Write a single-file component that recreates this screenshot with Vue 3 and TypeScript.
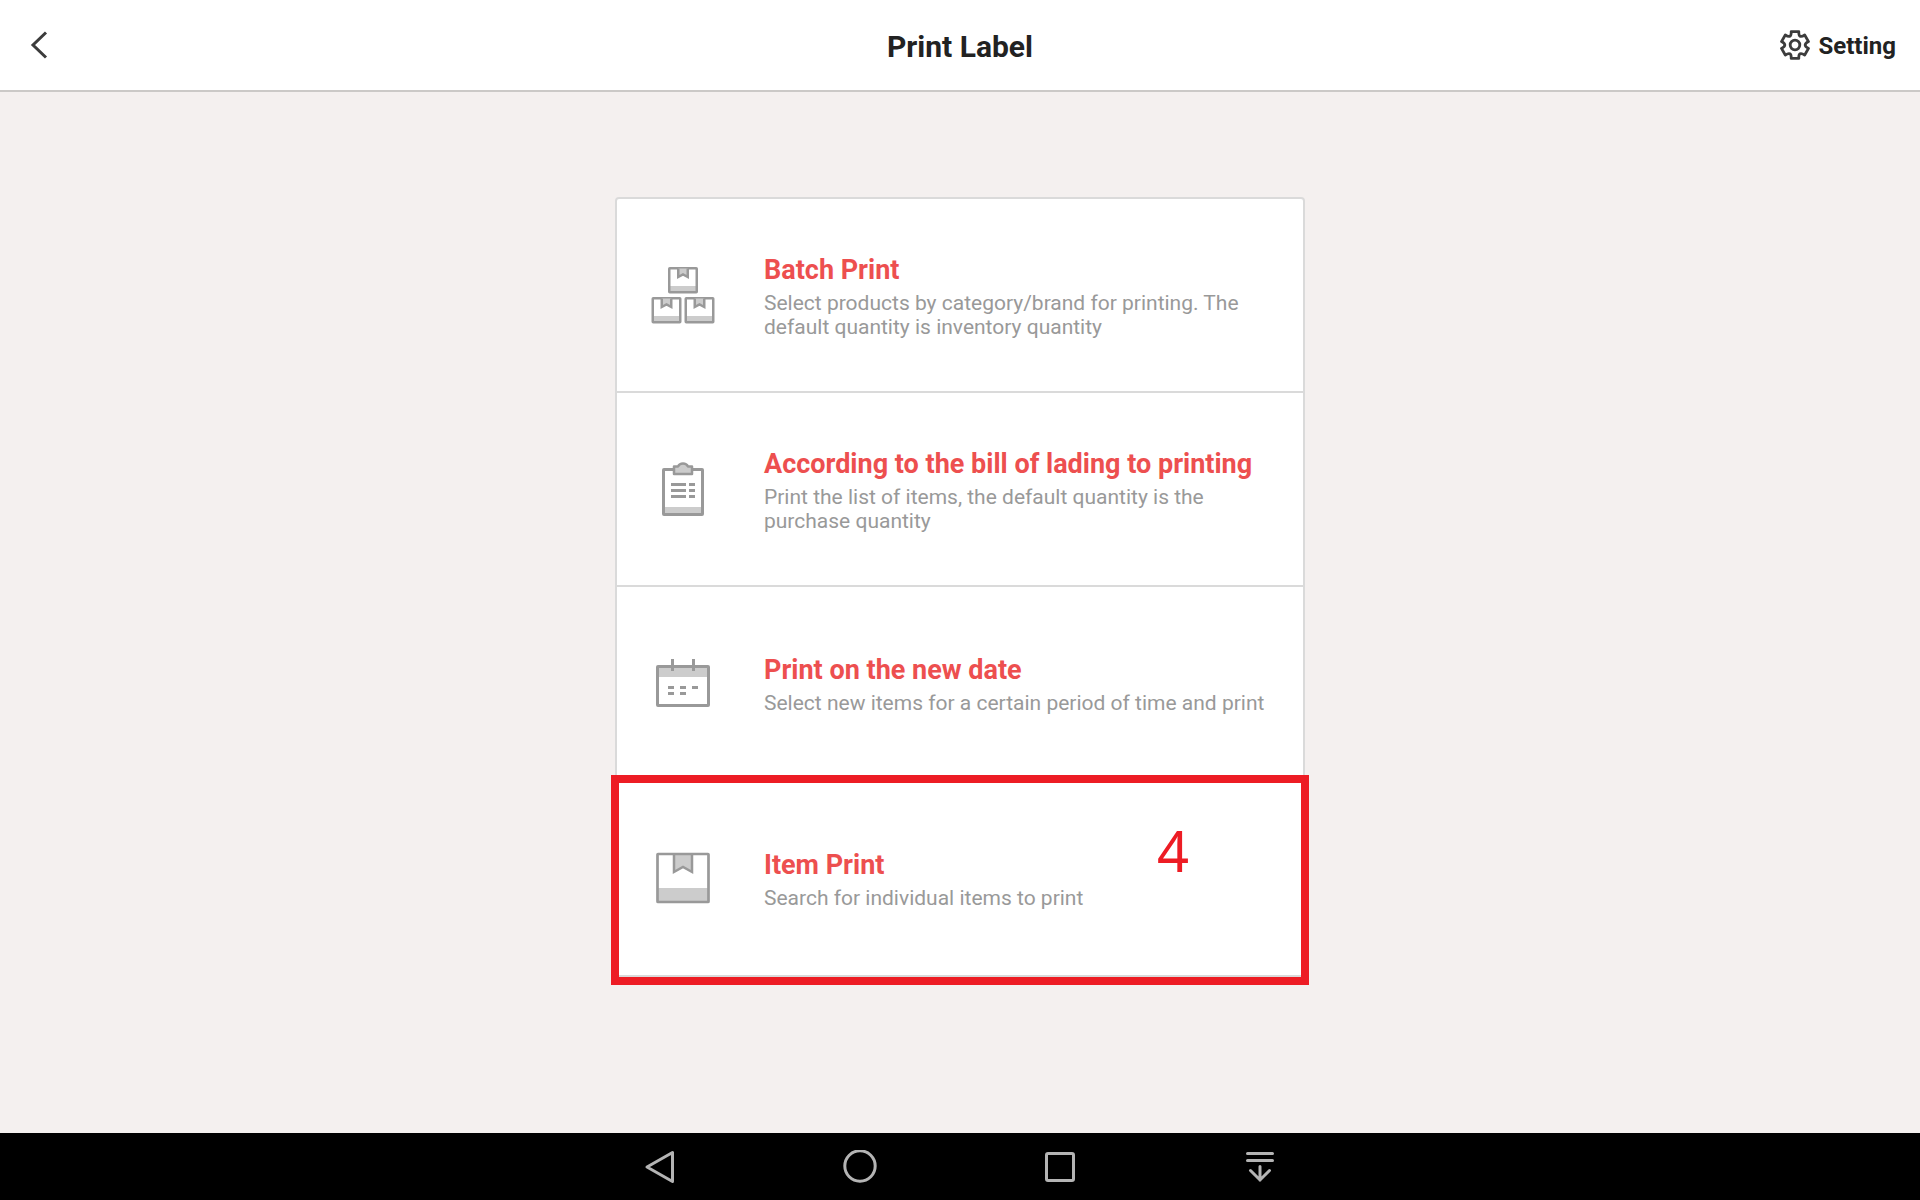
<script setup lang="ts">
type IconName = 'batch' | 'bill' | 'date' | 'item'

interface PrintOption {
  icon: IconName
  title: string
  text: string
  step?: string
}

const options: PrintOption[] = [
  {
    icon: 'batch',
    title: 'Batch Print',
    text: 'Select products by category/brand for printing. The default quantity is inventory quantity',
  },
  {
    icon: 'bill',
    title: 'According to the bill of lading to printing',
    text: 'Print the list of items, the default quantity is the purchase quantity',
  },
  {
    icon: 'date',
    title: 'Print on the new date',
    text: 'Select new items for a certain period of time and print',
  },
  {
    icon: 'item',
    title: 'Item Print',
    text: 'Search for individual items to print',
    step: '4',
  },
]

// Top-left corners of the three stacked boxes in the batch icon
const boxes = [
  [17, 4],
  [0.5, 34],
  [33.5, 34],
]

// Gear outline around the origin: six flat teeth joined by round notches
const notch = [
  [3.8, -13.4],
  [3.6, -8.4],
  [5.47, -7.31],
  [9.7, -9.98],
]
const gear =
  Array.from({ length: 6 }, (_, i) => {
    const angle = (i * Math.PI) / 3
    const [start, c1, c2, end] = notch.map(([x, y]) =>
      [x * Math.cos(angle) - y * Math.sin(angle), x * Math.sin(angle) + y * Math.cos(angle)]
        .map((n) => n.toFixed(2))
        .join(' '),
    )
    return `${i === 0 ? 'M' : 'L'}${start}C${c1} ${c2} ${end}`
  }).join('') + 'Z'
</script>

<template>
  <div class="page">
    <header class="header">
      <button class="back" type="button" aria-label="Back">
        <svg width="20" height="30" viewBox="0 0 20 30" fill="none" stroke="#3c3c3c" stroke-width="3">
          <path d="M16 2.500L3 15L16 27.500" />
        </svg>
      </button>
      <h1 class="heading">Print Label</h1>
      <button class="setting" type="button">
        <svg width="30" height="30" viewBox="-15 -15 30 30" fill="none" stroke="#3c3c3c" stroke-width="2.8" stroke-linejoin="round">
          <path :d="gear" />
          <circle r="4.800" />
        </svg>
        <span class="setting-label">Setting</span>
      </button>
    </header>

    <main class="main">
      <ul class="card">
        <li v-for="option in options" :key="option.icon" class="row" :class="{ marked: option.step }">
          <button class="option" type="button">
            <svg class="icon" width="64" height="64" viewBox="0 0 64 64" fill="none" stroke="#999" stroke-width="3">
              <template v-if="option.icon === 'batch'">
                <g v-for="([x, y], i) in boxes" :key="i" :transform="`translate(${x} ${y})`" stroke-width="2.5">
                  <path d="M2 19H28V24H2Z" fill="#ccc" stroke="none" />
                  <rect x="1.250" y="1.250" width="27.500" height="24" rx="0.500" />
                  <path d="M10.250 1.500V10L15 7.500L19.750 10V1.500" fill="#ccc" />
                </g>
              </template>
              <template v-else-if="option.icon === 'bill'">
                <path d="M13 50H51V57H13Z" fill="#ccc" stroke="none" />
                <rect x="12.500" y="12.500" width="39" height="45" rx="0.500" />
                <path
                  d="M23 9.500H27C28 7.500 30 6.500 32 6.500S36 7.500 37 9.500H41V17H23Z"
                  fill="#ccc"
                  stroke-width="2.500"
                  stroke-linejoin="round"
                />
                <path d="M20 27.500H35M38 27.500H44M20 33.500H35M38 33.500H44M20 39.500H35M38 39.500H44" />
              </template>
              <template v-else-if="option.icon === 'date'">
                <path d="M6 15H58V26H6Z" fill="#ccc" stroke="none" />
                <rect x="6.500" y="15.500" width="51" height="39" rx="0.500" />
                <path d="M21.500 8V20M42.500 8V20M17 36.500H23M29 36.500H35M41 36.500H47M17 42.500H23M29 42.500H35" />
              </template>
              <template v-else>
                <path d="M6 42H58V55H6Z" fill="#ccc" stroke="none" />
                <path d="M23 8V26L32 21L41 26V8" fill="#ccc" stroke-width="2.500" />
                <rect x="6.500" y="8" width="51" height="48" rx="0.500" stroke-width="2.700" />
              </template>
            </svg>
            <span class="copy">
              <span class="title">{{ option.title }}</span>
              <span class="text">{{ option.text }}</span>
            </span>
          </button>
          <span v-if="option.step" class="step">{{ option.step }}</span>
        </li>
      </ul>
    </main>

    <nav class="navbar" aria-label="System navigation">
      <button type="button" aria-label="Back">
        <svg width="34" height="34" viewBox="0 0 34 34">
          <path d="M29.500 2.500V31.500L4 17Z" stroke-linejoin="round" />
        </svg>
      </button>
      <button type="button" aria-label="Home">
        <svg width="34" height="34" viewBox="0 0 34 34"><circle cx="17" cy="16" r="15.200" /></svg>
      </button>
      <button type="button" aria-label="Recent apps">
        <svg width="34" height="34" viewBox="0 0 34 34">
          <rect x="3.500" y="3.500" width="27" height="27" rx="1.500" />
        </svg>
      </button>
      <button type="button" aria-label="Hide navigation bar">
        <svg width="34" height="34" viewBox="0 0 34 34">
          <path d="M4.500 3.500H29.500M4.500 10.500H29.500M17 16.500V30M7.500 20.500L17 30L26.500 20.500" />
        </svg>
      </button>
    </nav>
  </div>
</template>

<style>
body {
  margin: 0;
}
</style>

<style scoped>
.page {
  display: flex;
  flex-direction: column;
  min-height: 100vh;
  background: #f4f0ef;
  color: #222;
  font-family: Roboto, 'Liberation Sans', sans-serif;
}

button {
  padding: 0;
  border: 0;
  background: none;
  color: inherit;
  font: inherit;
  cursor: pointer;
}

svg {
  display: block;
  flex: none;
}

.header {
  display: grid;
  grid-template-columns: 1fr auto 1fr;
  align-items: center;
  height: 90px;
  padding: 0 24px;
  border-bottom: 2px solid #cbc9c7;
  background: #fff;
}

.back {
  justify-self: start;
  padding-left: 6px;
}

.heading {
  margin: 0;
  padding-top: 3px;
  font-size: 30px;
  line-height: 36px;
  font-weight: 700;
}

.setting {
  display: flex;
  align-items: center;
  justify-self: end;
  gap: 9px;
  font-size: 24px;
  line-height: 30px;
  font-weight: 700;
}

.setting-label {
  padding-top: 2px;
}

.main {
  display: flex;
  flex: 1;
  align-items: flex-start;
  justify-content: center;
  padding: 105px 24px;
}

.card {
  box-sizing: border-box;
  width: 100%;
  max-width: 690px;
  margin: 0;
  padding: 0;
  border: 2px solid #dadada;
  border-radius: 4px;
  background: #fff;
  list-style: none;
}

.row {
  position: relative;
  display: flex;
  min-height: 192px;
}

.row + .row {
  border-top: 2px solid #dadada;
}

.row.marked {
  min-height: 194px;
}

.marked::after {
  position: absolute;
  inset: -6px -6px -10px;
  border: 8px solid #ed1c24;
  content: '';
  pointer-events: none;
}

.option {
  display: flex;
  flex: 1;
  align-items: center;
  gap: 49px;
  padding: 0 30px 0 34px;
  text-align: left;
}

.copy {
  display: flex;
  flex-direction: column;
  gap: 5px;
  padding-top: 3px;
}

.title {
  color: #ed4f4f;
  font-size: 27px;
  line-height: 32px;
  font-weight: 700;
}

.text {
  color: #999;
  font-size: 21px;
  line-height: 24px;
}

.step {
  position: absolute;
  top: 31px;
  right: 114px;
  color: #ed1c24;
  font-family: 'Noto Sans', 'Open Sans', sans-serif;
  font-size: 56px;
  line-height: 76px;
}

.navbar {
  display: flex;
  justify-content: center;
  height: 67px;
  background: #000;
}

.navbar button {
  display: flex;
  align-items: center;
  justify-content: center;
  width: 200px;
}

.navbar svg {
  fill: none;
  stroke: #b4b4b4;
  stroke-width: 3;
  stroke-linecap: round;
}
</style>
